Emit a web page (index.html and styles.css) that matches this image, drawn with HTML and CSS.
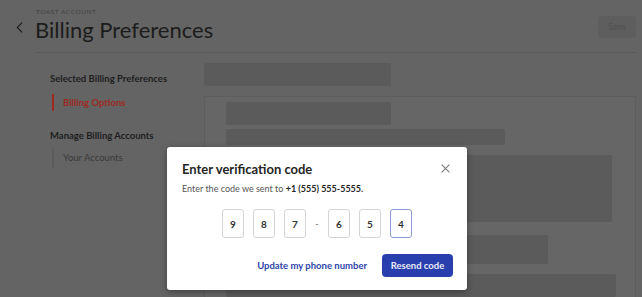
FILE: index.html
```html
<!DOCTYPE html>
<html lang="en">
<head>
<meta charset="utf-8">
<title>Billing Preferences</title>
<link rel="stylesheet" href="styles.css">
</head>
<body>
<div class="page">
  <header class="header">
    <button class="back" aria-label="Back">
      <svg width="7" height="11" viewBox="0 0 7 11"><path d="M6 0.6 L1.3 5.5 L6 10.4" fill="none" stroke="#1c1c1c" stroke-width="1.1"/></svg>
    </button>
    <div class="head-main">
      <div class="head-text">
        <div class="eyebrow">TOAST ACCOUNT</div>
        <h1 class="title">Billing Preferences</h1>
      </div>
      <button class="save">Save</button>
    </div>
  </header>
  <main class="main">
    <nav class="nav">
      <div class="nav-group">Selected Billing Preferences</div>
      <div class="nav-item active">Billing Options</div>
      <div class="nav-group second">Manage Billing Accounts</div>
      <div class="nav-item">Your Accounts</div>
    </nav>
    <section class="content">
      <div class="skel s-head"></div>
      <div class="card">
        <div class="skel s1"></div>
        <div class="skel s2"></div>
        <div class="skel s3"></div>
        <div class="skel s4"></div>
        <div class="skel s5"></div>
      </div>
    </section>
  </main>
</div>
<div class="modal" role="dialog">
  <button class="close" aria-label="Close">
    <svg width="9" height="9" viewBox="0 0 9 9"><path d="M0.6 0.6 L8.4 8.4 M8.4 0.6 L0.6 8.4" stroke="#7a7a7a" stroke-width="1.1"/></svg>
  </button>
  <h2 class="m-title">Enter verification code</h2>
  <p class="m-sub">Enter the code we sent to <b>+1 (555) 555-5555.</b></p>
  <div class="code">
    <span class="digit">9</span>
    <span class="digit">8</span>
    <span class="digit">7</span>
    <span class="dash">-</span>
    <span class="digit">6</span>
    <span class="digit">5</span>
    <span class="digit focus">4</span>
  </div>
  <div class="actions">
    <a class="link">Update my phone number</a>
    <button class="primary">Resend code</button>
  </div>
</div>
</body>
</html>
```
FILE: styles.css
```css
* { box-sizing: border-box; }
html, body { margin: 0; height: 100%; overflow: hidden; }
body {
  background: #646464;
  font-family: "Lato", "Liberation Sans", sans-serif;
  position: relative;
}
button { font-family: inherit; border: 0; padding: 0; background: none; }

.header {
  display: flex;
  padding: 0 6px 0 16px;
}
.back {
  width: 7px;
  height: 11px;
  margin: 22px 13px 0 0;
  display: block;
}
.back svg { display: block; }
.head-main {
  flex: 1;
  display: flex;
  justify-content: space-between;
  align-items: flex-start;
  border-bottom: 1px solid #5a5a5a;
  height: 53px;
}
.eyebrow {
  font-size: 6.5px;
  letter-spacing: 0.55px;
  color: #404040;
  margin-top: 8px;
  line-height: 8px;
}
.title {
  margin: 1px 0 0 -1px;
  font-size: 22px;
  font-weight: 400;
  line-height: 26px;
  color: #1c1c1c;
}
.save {
  margin-top: 16px;
  width: 38px;
  height: 22px;
  border-radius: 4px;
  background: #5e5e5e;
  color: #4e4e4e;
  font-size: 8.5px;
}

.main {
  display: flex;
  padding-left: 50px;
  padding-right: 6px;
}
.nav {
  width: 154px;
  padding-top: 20px;
}
.nav-group {
  font-size: 9.5px;
  font-weight: 700;
  color: #1e1e1e;
  line-height: 12px;
}
.nav-group.second { margin-top: 19px; }
.nav-item {
  margin: 6px 0 0 2px;
  padding-left: 9px;
  border-left: 2px solid #5c5c5c;
  font-size: 9.5px;
  line-height: 17px;
  color: #3a3a3a;
  height: 20px;
  padding-top: 1px;
}
.nav-item.active {
  border-left-color: #9c2a1f;
  color: #9c2a1f;
  font-weight: 700;
  margin-top: 9px;
  height: 17px;
  padding-top: 0;
}

.content {
  flex: 1;
  padding-top: 10px;
}
.skel { background: #5b5b5b; border-radius: 2px; }
.s-head { width: 187px; height: 23px; }
.card {
  margin-top: 10px;
  border: 1px solid #5d5d5d;
  border-bottom: 0;
  border-radius: 2px 2px 0 0;
  padding: 5px 0 0 21px;
  height: 201px;
  background: #666;
  overflow: hidden;
}
.s1 { width: 165px; height: 23px; }
.s2 { width: 279px; height: 16px; margin-top: 4px; }
.s3 { width: 386px; height: 67px; margin-top: 10px; }
.s4 { width: 322px; height: 29px; margin-top: 13px; }
.s5 { width: 390px; height: 23px; margin-top: 10px; }

.modal {
  position: absolute;
  left: 167px;
  top: 147px;
  width: 300px;
  height: 143px;
  background: #fff;
  border-radius: 3px;
  box-shadow: 0 2px 6px rgba(0,0,0,0.35);
  padding: 14px 14px 13px 15px;
}
.close {
  position: absolute;
  right: 17px;
  top: 17px;
  width: 9px;
  height: 9px;
  display: block;
}
.close svg { display: block; }
.m-title {
  margin: 0;
  font-size: 13px;
  font-weight: 700;
  line-height: 16px;
  color: #252525;
}
.m-sub {
  margin: 6px 0 0;
  font-size: 9px;
  line-height: 12px;
  color: #555;
}
.m-sub b { color: #252525; font-weight: 700; }
.code {
  margin-top: 14px;
  display: flex;
  justify-content: center;
  gap: 9px;
  padding-right: 1px;
}
.digit {
  width: 22px;
  height: 29px;
  border: 1px solid #d4d4d4;
  border-radius: 3px;
  display: flex;
  align-items: center;
  justify-content: center;
  font-size: 10px;
  font-weight: 700;
  color: #333;
}
.digit.focus { border-color: #8d9ad6; }
.dash {
  width: 4px;
  display: flex;
  align-items: center;
  justify-content: center;
  font-size: 9px;
  color: #666;
}
.actions {
  margin-top: 16px;
  display: flex;
  justify-content: flex-end;
  align-items: center;
  gap: 15px;
}
.link {
  font-size: 9.5px;
  font-weight: 700;
  color: #2c44a8;
}
.primary {
  width: 71px;
  height: 23px;
  border-radius: 4px;
  background: #2a3fae;
  color: #e9ebf7;
  font-size: 9.5px;
  font-weight: 700;
}
```
